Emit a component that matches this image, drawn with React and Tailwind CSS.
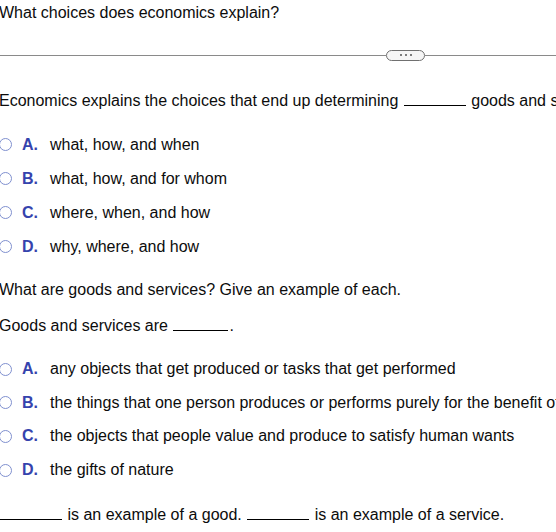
const q1Options = [
  ["A.", "what, how, and when"],
  ["B.", "what, how, and for whom"],
  ["C.", "where, when, and how"],
  ["D.", "why, where, and how"],
];

const q2Options = [
  ["A.", "any objects that get produced or tasks that get performed"],
  ["B.", "the things that one person produces or performs purely for the benefit of another person"],
  ["C.", "the objects that people value and produce to satisfy human wants"],
  ["D.", "the gifts of nature"],
];

function Blank({ w }) {
  return <span className={`inline-block border-b border-black align-baseline mx-[1px] ${w}`} style={{ height: 14 }} />;
}

function Option({ letter, text }) {
  return (
    <div className="flex items-center h-[20px] whitespace-nowrap">
      <span className="w-[13px] h-[13px] rounded-full border-[1.6px] border-[#7f90cf] bg-white shrink-0 ml-[-1px]" />
      <span className="ml-[10px] w-[28px] shrink-0 font-bold text-[#3543ad]">{letter}</span>
      <span className="shrink-0">{text}</span>
    </div>
  );
}

export default function App() {
  return (
    <div
      className="w-[556px] h-[532px] overflow-hidden bg-white text-[16px] leading-[20px] text-[#0c0c0c]"
      style={{ fontFamily: '"Liberation Sans", Arial, sans-serif' }}
    >
      <div className="pt-[3px] ml-[-1px] whitespace-nowrap">What choices does economics explain?</div>

      <div className="flex items-center mt-[26px] h-[12px]">
        <div className="flex-1 h-px bg-[#8a8a8a]" />
        <div className="w-[39px] h-[11px] rounded-full border border-[#707070] bg-[#f6f6f6] flex items-center justify-center gap-[3px]">
          <span className="w-[2px] h-[2px] rounded-full bg-[#555]" />
          <span className="w-[2px] h-[2px] rounded-full bg-[#555]" />
          <span className="w-[2px] h-[2px] rounded-full bg-[#555]" />
        </div>
        <div className="w-[131px] h-px bg-[#8a8a8a]" />
      </div>

      <div className="mt-[30px] ml-[-1px] whitespace-nowrap">
        Economics explains the choices that end up determining <Blank w="w-[62px]" /> goods and services.
      </div>

      <div className="mt-[23.5px] flex flex-col gap-[14px]">
        {q1Options.map(([l, t]) => (
          <Option key={l} letter={l} text={t} />
        ))}
      </div>

      <div className="mt-[23.5px] ml-[-1px] whitespace-nowrap">
        What are goods and services? Give an example of each.
      </div>
      <div className="mt-[16px] ml-[-1px] whitespace-nowrap">
        Goods and services are <Blank w="w-[55px]" />.
      </div>

      <div className="mt-[23px] flex flex-col gap-[13.7px]">
        {q2Options.map(([l, t]) => (
          <Option key={l} letter={l} text={t} />
        ))}
      </div>

      <div className="mt-[25.3px] ml-[-1px] whitespace-nowrap">
        <Blank w="w-[62px]" /> is an example of a good. <Blank w="w-[62px]" /> is an example of a service.
      </div>
    </div>
  );
}
